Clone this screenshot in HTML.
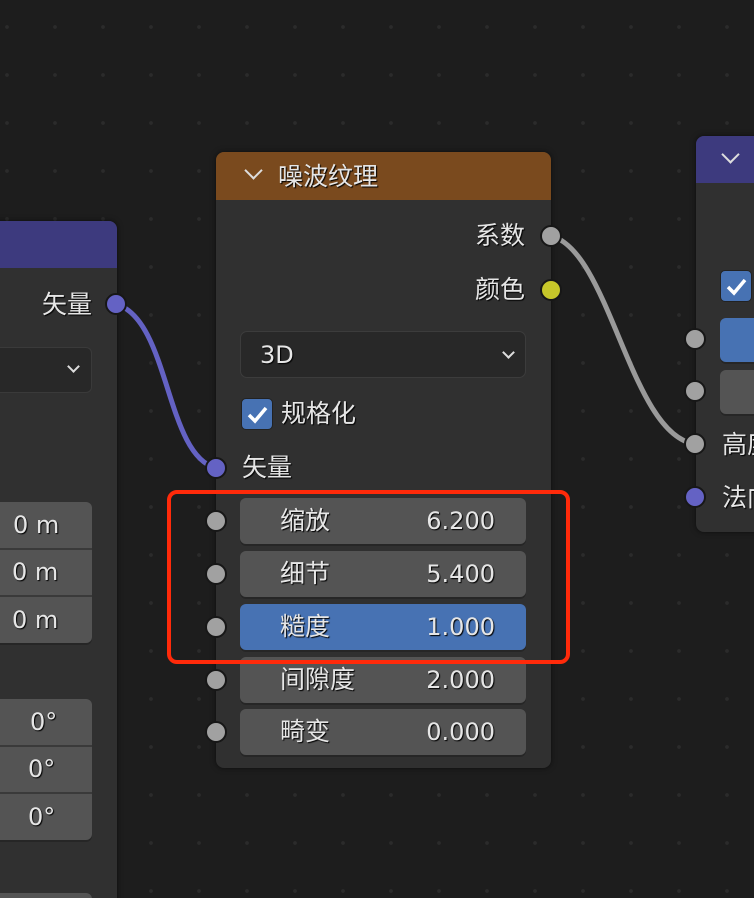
<!DOCTYPE html>
<html><head><meta charset="utf-8"><style>
*{margin:0;padding:0;box-sizing:border-box}
html,body{width:754px;height:898px;overflow:hidden}
body{background:#1d1d1d;position:relative;font-family:"DejaVu Sans","Noto Sans CJK SC",sans-serif;color:#e6e6e6}
.grid{position:absolute;inset:0;background-image:radial-gradient(circle,#2b2b2b 1.6px,transparent 2.2px);background-size:48px 48px;background-position:-17px 3px}
.node{position:absolute;background:#303030;border-radius:8px;box-shadow:0 0 6px rgba(0,0,0,.6);overflow:hidden}
.hdr{position:absolute;left:0;right:0;top:0;height:47px}
.a{position:absolute}
.t{position:absolute;font-size:24px;line-height:28px;white-space:nowrap;text-shadow:1px 1px 1px #000}
.c{font-family:"Noto Sans CJK SC",sans-serif;font-size:25px}
.fld{position:absolute;background:#545454;border-radius:6px;box-shadow:0 2px 0 #262626}
.sock{position:absolute;width:22px;height:22px;border-radius:50%;background:#a1a1a1;border:2px solid #171717}
.cb{position:absolute;width:32px;height:32px;border-radius:5px;background:#4772b3;border:1px solid #222}
.chev{position:absolute;width:13px;height:13px;border-right:2px solid #ddd;border-bottom:2px solid #ddd;transform:rotate(45deg)}
</style></head><body>
<div class="grid"></div>
<svg class="a" style="left:0;top:0" width="754" height="898">
<path d="M116 304 C 170 320, 165 455, 216 468" stroke="#6462c4" stroke-width="5" fill="none"/>
<path d="M551 236 C 610 250, 630 435, 695 444" stroke="#9a9a9a" stroke-width="5" fill="none"/>
</svg>

<!-- left node -->
<div class="node" style="left:-20px;top:221px;width:137px;height:700px">
 <div class="hdr" style="background:#3d3a7e"></div>
 <div class="t c" style="right:25px;top:68px">矢量</div>
 <div class="a" style="left:0;width:112px;top:126px;height:46px;background:#282828;border-radius:6px;border:1px solid #3a3a3a"></div>
 <div class="chev" style="left:89px;top:141px;width:9px;height:9px"></div>
 <div class="fld" style="left:0;width:112px;top:281px;height:141px;background:#545454"></div>
 <div class="a" style="left:0;width:112px;top:327px;height:2px;background:#3a3a3a"></div>
 <div class="a" style="left:0;width:112px;top:374px;height:2px;background:#3a3a3a"></div>
 <div class="t" style="left:33px;top:290px">0 m</div>
 <div class="t" style="left:32px;top:337px">0 m</div>
 <div class="t" style="left:32px;top:385px">0 m</div>
 <div class="fld" style="left:0;width:112px;top:478px;height:141px"></div>
 <div class="a" style="left:0;width:112px;top:524px;height:2px;background:#3a3a3a"></div>
 <div class="a" style="left:0;width:112px;top:571px;height:2px;background:#3a3a3a"></div>
 <div class="t" style="left:50px;top:487px">0°</div>
 <div class="t" style="left:48px;top:534px">0°</div>
 <div class="t" style="left:48px;top:582px">0°</div>
 <div class="fld" style="left:0;width:112px;top:672px;height:40px"></div>
</div>
<div class="sock" style="left:105px;top:293px;background:#6462c4"></div>

<!-- middle node -->
<div class="node" style="left:216px;top:152px;width:335px;height:616px">
 <div class="hdr" style="background:#7a4a1e;height:48px"></div>
 <div class="chev" style="left:31px;top:12px"></div>
 <div class="t c" style="left:62px;top:9px">噪波纹理</div>
 <div class="t c" style="right:26px;top:68px">系数</div>
 <div class="t c" style="right:26px;top:122px">颜色</div>
 <div class="a" style="left:24px;top:179px;width:286px;height:47px;background:#282828;border-radius:7px;border:1px solid #3c3c3c"></div>
 <div class="t" style="left:44px;top:189px">3D</div>
 <div class="chev" style="left:288px;top:196px;width:9px;height:9px"></div>
 <div class="cb" style="left:25px;top:246px"></div>
 <svg class="a" style="left:25px;top:246px" width="32" height="32"><path d="M8 17 L14 23 L25 10" stroke="#fff" stroke-width="3.5" fill="none"/></svg>
 <div class="t c" style="left:65px;top:246px">规格化</div>
 <div class="t c" style="left:26px;top:300px">矢量</div>
 <div class="fld" style="left:24px;top:346px;width:286px;height:46px"></div>
 <div class="t c" style="left:64px;top:353px">缩放</div><div class="t" style="right:56px;top:355px">6.200</div>
 <div class="fld" style="left:24px;top:399px;width:286px;height:46px"></div>
 <div class="t c" style="left:64px;top:406px">细节</div><div class="t" style="right:56px;top:408px">5.400</div>
 <div class="fld" style="left:24px;top:452px;width:286px;height:46px;background:#4772b3"></div>
 <div class="t c" style="left:64px;top:459px">糙度</div><div class="t" style="right:56px;top:461px">1.000</div>
 <div class="fld" style="left:24px;top:505px;width:286px;height:46px"></div>
 <div class="t c" style="left:64px;top:512px">间隙度</div><div class="t" style="right:56px;top:514px">2.000</div>
 <div class="fld" style="left:24px;top:557px;width:286px;height:46px"></div>
 <div class="t c" style="left:64px;top:564px">畸变</div><div class="t" style="right:56px;top:566px">0.000</div>
</div>
<div class="sock" style="left:540px;top:225px"></div>
<div class="sock" style="left:540px;top:279px;background:#c7c72a"></div>
<div class="sock" style="left:205px;top:457px;background:#6462c4"></div>
<div class="sock" style="left:205px;top:510px"></div>
<div class="sock" style="left:205px;top:563px"></div>
<div class="sock" style="left:205px;top:616px"></div>
<div class="sock" style="left:205px;top:669px"></div>
<div class="sock" style="left:205px;top:721px"></div>

<!-- right node -->
<div class="node" style="left:696px;top:136px;width:80px;height:396px">
 <div class="hdr" style="background:#3d3a7e"></div>
 <div class="chev" style="left:28px;top:12px"></div>
 <div class="cb" style="left:24px;top:134px"></div>
 <svg class="a" style="left:24px;top:134px" width="32" height="32"><path d="M8 17 L14 23 L25 10" stroke="#fff" stroke-width="3.5" fill="none"/></svg>
 <div class="fld" style="left:24px;top:182px;width:60px;height:44px;background:#4772b3"></div>
 <div class="fld" style="left:24px;top:234px;width:60px;height:44px"></div>
 <div class="t c" style="left:26px;top:293px">高度</div>
 <div class="t c" style="left:26px;top:346px">法向</div>
</div>
<div class="sock" style="left:684px;top:328px"></div>
<div class="sock" style="left:684px;top:380px"></div>
<div class="sock" style="left:684px;top:433px"></div>
<div class="sock" style="left:684px;top:486px;background:#6462c4"></div>

<!-- red highlight -->
<div class="a" style="left:167px;top:490px;width:403px;height:174px;border:4px solid #ff2a0a;border-radius:10px"></div>
</body></html>
